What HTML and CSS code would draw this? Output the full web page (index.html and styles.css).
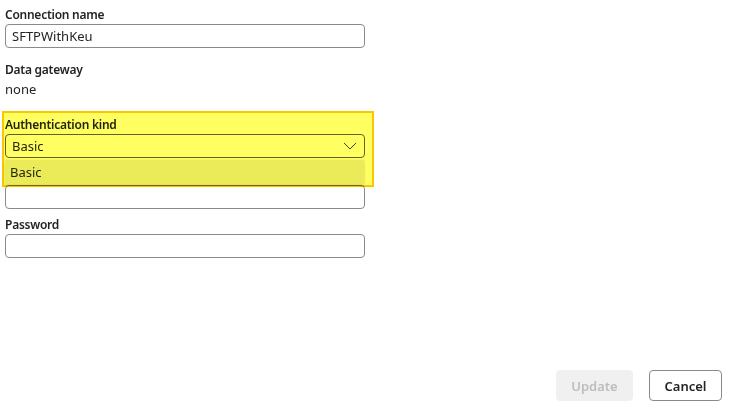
FILE: index.html
```html
<!DOCTYPE html>
<html lang="en">
<head>
  <meta charset="UTF-8">
  <title>Edit connection</title>
  <link rel="stylesheet" href="styles.css">
</head>
<body>

  <main class="form">
    <!-- Connection -->
    <div class="field field-name">
      <label class="label" for="connName">Connection name</label>
      <input class="input" id="connName" type="text" value="SFTPWithKeu">
    </div>

    <div class="field field-gateway">
      <div class="label">Data gateway</div>
      <div class="value">none</div>
    </div>

    <!-- Auth -->
    <div class="field field-auth">
      <div class="label">Authentication kind</div>
      <div class="select">
        <span>Basic</span>
        <svg class="chevron" width="14" height="8" viewBox="0 0 14 8">
          <path d="M1 1 L7 7 L13 1" fill="none" stroke="#424242" stroke-width="1"/>
        </svg>
      </div>
      <ul class="listbox">
        <li class="option">Basic</li>
      </ul>
      <div class="highlight"></div>
    </div>

    <!-- username label sits under the open listbox -->
    <div class="field field-user">
      <input class="input" id="user" type="text" aria-label="Username">
    </div>

    <div class="field field-pass">
      <label class="label" for="pass">Password</label>
      <input class="input" id="pass" type="password">
    </div>
  </main>

  <footer class="actions">
    <button class="btn btn-primary" disabled>Update</button>
    <button class="btn">Cancel</button>
  </footer>

</body>
</html>
```

FILE: styles.css
```css
html, body {
  height: 100%;
}

body {
  margin: 0;
  padding: 4px 9px 13px 5px;
  box-sizing: border-box;
  display: flex;
  flex-direction: column;
  font-family: "Noto Sans", "Open Sans", sans-serif;
  color: #242424;
  background: white;
}

.form {
  width: 360px;
  display: flex;
  flex-direction: column;
}

.field {
  display: flex;
  flex-direction: column;
  margin-top: 6px;
}

.field-name {
  margin-top: 0;
}

.field-gateway {
  margin-top: 11px;
}

.field-auth {
  position: relative;
  margin-top: 15px;
}

.field-user {
  margin-top: 27px;
}

.field-pass {
  margin-top: 5px;
}

.label {
  box-sizing: border-box;
  height: 20px;
  padding-top: 1px;
  font-size: 12px;
  font-weight: 600;
  line-height: 20px;
  letter-spacing: -0.25px;
}

.value {
  padding-top: 1px;
  font-size: 13px;
  line-height: 19px;
}

.input, .select {
  box-sizing: border-box;
  width: 360px;
  height: 24px;
  margin: 0;
  padding: 0 6px;
  border: 1px solid #8a8a8a;
  border-radius: 4px;
  font-family: inherit;
  font-size: 13px;
  color: #242424;
  background: white;
  outline: none;
}

.select {
  display: flex;
  align-items: center;
  justify-content: space-between;
  border-color: #616161;
  padding-right: 7px;
}

.listbox {
  position: absolute;
  top: 46px;
  left: 0;
  width: 359px;
  margin: 0;
  padding: 0;
  list-style: none;
  background: white;
  box-shadow: 0 1px 3px rgba(0, 0, 0, 0.18);
  z-index: 2;
}

.option {
  height: 24px;
  line-height: 25px;
  padding-left: 5px;
  font-size: 13px;
  background: #ebebeb;
}

.highlight {
  position: absolute;
  top: -3px;
  left: -3px;
  width: 372px;
  height: 76px;
  box-sizing: border-box;
  border: 2px solid #f8c800;
  background: #ffff62;
  mix-blend-mode: multiply;
  pointer-events: none;
  z-index: 3;
}

.actions {
  margin-top: auto;
  display: flex;
  justify-content: flex-end;
  gap: 16px;
}

.btn {
  height: 31px;
  min-width: 73px;
  padding: 0 12px;
  border: 1px solid #8a8a8a;
  border-radius: 4px;
  background: white;
  color: #242424;
  font-family: inherit;
  font-size: 13px;
  font-weight: 600;
  cursor: pointer;
}

.btn-primary {
  min-width: 77px;
  border-color: #f0f0f0;
  background: #f0f0f0;
  color: #bdbdbd;
  cursor: default;
}
```
